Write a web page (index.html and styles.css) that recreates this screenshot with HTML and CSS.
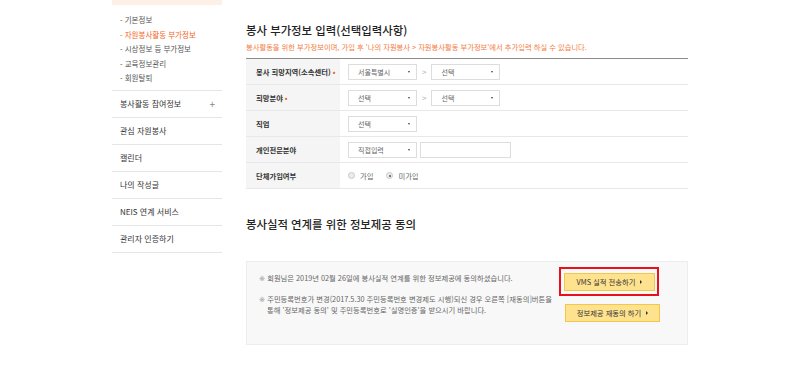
FILE: index.html
```html
<!DOCTYPE html>
<html lang="ko">
<head>
    <meta charset="UTF-8">
    <title>봉사 부가정보 입력</title>
    <link rel="stylesheet" href="styles.css">
</head>
<body>
    <div class="page">
        <div class="side">
            <div class="side-top"></div>
            <ul class="sub-menu">
                <li>- 기본정보</li>
                <li class="on">- 자원봉사활동 부가정보</li>
                <li>- 시상정보 등 부가정보</li>
                <li>- 교육정보관리</li>
                <li>- 회원탈퇴</li>
            </ul>
            <ul class="main-menu">
                <li>봉사활동 참여정보 <span class="plus">+</span></li>
                <li>관심 자원봉사</li>
                <li>캘린더</li>
                <li>나의 작성글</li>
                <li>NEIS 연계 서비스</li>
                <li>관리자 인증하기</li>
            </ul>
        </div>

        <div class="content">
            <h2 class="title">봉사 부가정보 입력(선택입력사항)</h2>
            <p class="desc">봉사활동을 위한 부가정보이며, 가입 후 '나의 자원봉사 &gt; 자원봉사활동 부가정보'에서 추가입력 하실 수 있습니다.</p>

            <div class="form-table">
                <div class="row">
                    <div class="th">봉사 희망지역(소속센터) <span class="req">•</span></div>
                    <div class="td">
                        <div class="sel">서울특별시<i class="caret"></i></div>
                        <span class="gt">&gt;</span>
                        <div class="sel">선택<i class="caret"></i></div>
                    </div>
                </div>
                <div class="row">
                    <div class="th">희망분야 <span class="req">•</span></div>
                    <div class="td">
                        <div class="sel">선택<i class="caret"></i></div>
                        <span class="gt">&gt;</span>
                        <div class="sel">선택<i class="caret"></i></div>
                    </div>
                </div>
                <div class="row">
                    <div class="th">직업</div>
                    <div class="td">
                        <div class="sel">선택<i class="caret"></i></div>
                    </div>
                </div>
                <div class="row">
                    <div class="th">개인전문분야</div>
                    <div class="td">
                        <div class="sel">직접입력<i class="caret"></i></div>
                        <div class="txt"></div>
                    </div>
                </div>
                <div class="row">
                    <div class="th">단체가입여부</div>
                    <div class="td">
                        <label class="radio"><span class="dot"></span>가입</label>
                        <label class="radio"><span class="dot checked"></span>미가입</label>
                    </div>
                </div>
            </div>

            <h2 class="title title2">봉사실적 연계를 위한 정보제공 동의</h2>

            <div class="agree-box">
                <div class="agree-text">
                    <p><span class="note">※&#xFE0E;</span> 회원님은 2019년 02월 26일에 봉사실적 연계를 위한 정보제공에 동의하셨습니다.</p>
                    <p><span class="note">※&#xFE0E;</span> 주민등록번호가 변경(2017.5.30 주민등록번호 변경제도 시행)되신 경우 오른쪽 [재동의]버튼을 통해 '정보제공 동의' 및 주민등록번호로 '실명인증'을 받으시기 바랍니다.</p>
                </div>
                <div class="agree-btns">
                    <div class="mark">
                        <a class="btn">VMS 실적 전송하기<i class="tri"></i></a>
                    </div>
                    <a class="btn">정보제공 재동의 하기<i class="tri"></i></a>
                </div>
            </div>
        </div>
    </div>
</body>
</html>
```

FILE: styles.css
```css
body {
    margin: 0;
    background: #fff;
    font-family: "Noto Sans CJK KR", "Noto Sans", sans-serif;
    color: #333;
}
ul {
    list-style: none;
    margin: 0;
    padding: 0;
}
p {
    margin: 0;
}
.page {
    display: flex;
    padding-left: 112px;
}

/* 왼쪽 메뉴 */
.side {
    width: 110px;
    flex-shrink: 0;
}
.side-top {
    height: 5px;
    background: #fcf0e7;
}
.sub-menu {
    padding: 8px 0 4px 8px;
    border-bottom: 1px solid #e6e6e6;
}
.sub-menu li {
    font-size: 7.5px;
    line-height: 14.5px;
    color: #555;
}
.sub-menu li.on {
    color: #f26522;
}
.main-menu li {
    display: flex;
    justify-content: space-between;
    align-items: center;
    height: 26px;
    padding: 0 8px;
    border-bottom: 1px solid #e6e6e6;
    font-size: 8px;
    color: #333;
}
.main-menu .plus {
    font-size: 10px;
    color: #888;
    margin-right: -1px;
}

/* 본문 */
.content {
    width: 442px;
    margin-left: 24px;
}
.title {
    margin: 22px 0 0;
    font-size: 11.4px;
    line-height: 16px;
    font-weight: 500;
    color: #222;
}
.desc {
    margin-top: 4px;
    font-size: 7.3px;
    line-height: 10px;
    color: #f47b3e;
}
.form-table {
    margin-top: 6px;
    border-top: 1px solid #8c8c8c;
}
.row {
    display: flex;
    height: 25px;
    border-bottom: 1px solid #e8e8e8;
}
.th {
    width: 84px;
    padding-left: 10px;
    display: flex;
    align-items: center;
    background: #f5f5f5;
    font-size: 7.3px;
    font-weight: 600;
    color: #333;
}
.req {
    color: #f26522;
    margin-left: 2px;
}
.td {
    flex: 1;
    display: flex;
    align-items: center;
    padding-left: 8px;
    gap: 3px;
}
.sel {
    width: 58px;
    height: 14px;
    padding: 0 0 0 9px;
    border: 1px solid #ddd;
    display: flex;
    align-items: center;
    position: relative;
    font-size: 7px;
    color: #666;
}
.caret {
    position: absolute;
    right: 6px;
    top: 6px;
    border-left: 1.5px solid transparent;
    border-right: 1.5px solid transparent;
    border-top: 2.5px solid #444;
}
.gt {
    font-size: 8px;
    color: #aaa;
    margin: 0 2px;
}
.txt {
    width: 89px;
    height: 14px;
    border: 1px solid #ddd;
}
.radio {
    display: flex;
    align-items: center;
    font-size: 7.3px;
    color: #666;
    margin-right: 10px;
}
.dot {
    width: 5px;
    height: 5px;
    border: 1px solid #c8c8c8;
    border-radius: 50%;
    background: #ececec;
    margin-right: 5px;
    position: relative;
}
.dot.checked::after {
    content: "";
    position: absolute;
    left: 1.5px;
    top: 1.5px;
    width: 2px;
    height: 2px;
    border-radius: 50%;
    background: #555;
}
.title2 {
    margin-top: 27px;
}

/* 정보제공 동의 */
.agree-box {
    margin-top: 29px;
    height: 82px;
    display: flex;
    justify-content: space-between;
    background: #f8f8f8;
    border: 1px solid #ededed;
}
.agree-text {
    width: 300px;
    padding: 11px 0 0 12px;
}
.agree-text p {
    font-size: 7.3px;
    line-height: 11px;
    color: #666;
    padding-left: 8px;
    text-indent: -8px;
    margin-bottom: 10px;
}
.note {
    font-family: "DejaVu Sans", sans-serif;
    color: #999;
}
.agree-btns {
    display: flex;
    flex-direction: column;
    align-items: flex-end;
    padding: 5px 27px 0 0;
    gap: 8px;
}
.mark {
    border: 2px solid #e8101c;
    padding: 4px 2px 3px 3px;
    margin-right: 1px;
}
.btn {
    display: flex;
    align-items: center;
    justify-content: center;
    height: 16px;
    width: 89px;
    background: #ffe28e;
    border: 1px solid #f1c84b;
    font-size: 7.3px;
    color: #333;
}
.agree-btns > .btn {
    width: 93px;
}
.tri {
    margin-left: 5px;
    border-top: 2px solid transparent;
    border-bottom: 2px solid transparent;
    border-left: 2.5px solid #333;
}
```
